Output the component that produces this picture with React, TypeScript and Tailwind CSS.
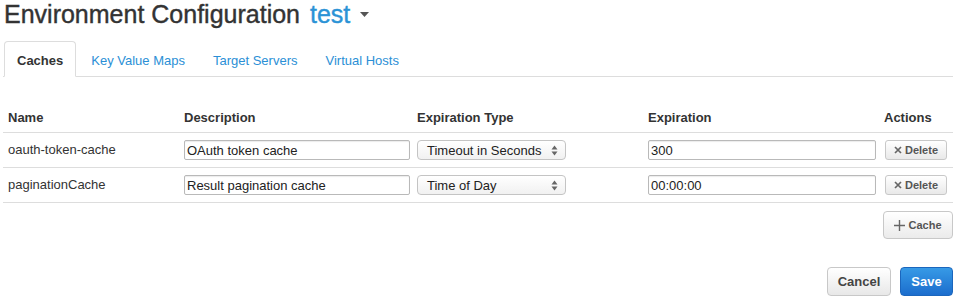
import React from "react";

const font = { fontFamily: '"Liberation Sans", Arial, sans-serif' };

function UpDown() {
  return (
    <svg width="7" height="11" viewBox="0 0 7 11" className="shrink-0">
      <path d="M3.5 0.5 L6.5 4.5 L0.5 4.5 Z" fill="#666" />
      <path d="M3.5 10.5 L6.5 6.5 L0.5 6.5 Z" fill="#666" />
    </svg>
  );
}

function TextInput({ value, w }: { value: string; w: string }) {
  return (
    <div
      className={`${w} h-[20px] border border-[#b9b9b9] rounded-[2px] bg-white shadow-[inset_0_1px_1px_rgba(0,0,0,0.08)] flex items-center pl-[2px] text-[13px] text-[#222] leading-none`}
    >
      {value}
    </div>
  );
}

function SelectBox({ value }: { value: string }) {
  return (
    <div className="w-[149px] h-[20px] border border-[#c4c4c4] rounded-[4px] bg-gradient-to-b from-white to-[#f1f1f1] flex items-center justify-between pl-[9px] pr-[7px] text-[13px] text-[#222] leading-none">
      <span>{value}</span>
      <UpDown />
    </div>
  );
}

function DeleteBtn() {
  return (
    <button className="w-[62px] h-[20px] border border-[#c8c8c8] rounded-[3px] bg-gradient-to-b from-white to-[#e9e9e9] flex items-center justify-center gap-[3px] text-[11px] font-bold text-[#555] leading-none">
      <svg width="8" height="8" viewBox="0 0 8 8">
        <path d="M1 1 L7 7 M7 1 L1 7" stroke="#666" strokeWidth="1.7" />
      </svg>
      <span>Delete</span>
    </button>
  );
}

const cols = "grid grid-cols-[176px_233px_231px_236px_74px]";

export default function App() {
  const rows = [
    { name: "oauth-token-cache", desc: "OAuth token cache", type: "Timeout in Seconds", exp: "300" },
    { name: "paginationCache", desc: "Result pagination cache", type: "Time of Day", exp: "00:00:00" },
  ];
  return (
    <div className="w-[958px] h-[300px] bg-white overflow-hidden text-[#333]" style={font}>
      <div className="pl-[3px] w-[953px]">
        {/* Title */}
        <div className="flex items-center h-[28px] leading-[28px] pl-[1px]">
          <span className="text-[25px] text-[#333] [-webkit-text-stroke:0.4px_#333]">Environment Configuration</span>
          <span className="text-[25px] text-[#2b93d6] ml-[10px] [-webkit-text-stroke:0.4px_#2b93d6]">test</span>
          <svg width="9" height="5" viewBox="0 0 9 5" className="ml-[10px] mt-[1px]">
            <path d="M0 0 L9 0 L4.5 5 Z" fill="#555" />
          </svg>
        </div>

        {/* Tabs */}
        <div className="mt-[13px] flex border-b border-[#dddddd] pl-[1px] h-[36px]">
          <div className="h-[36px] px-[12px] pt-[10px] border border-[#dddddd] border-b-white rounded-t-[4px] bg-white text-[13px] leading-[18px] font-bold text-[#333] mr-[2px]">
            Caches
          </div>
          {["Key Value Maps", "Target Servers", "Virtual Hosts"].map((t) => (
            <div
              key={t}
              className="h-[35px] px-[12px] pt-[10px] border border-transparent text-[13px] leading-[18px] text-[#2b8fd6] mr-[2px]"
            >
              {t}
            </div>
          ))}
        </div>

        {/* Table */}
        <div className="mt-[21px]">
          <div className={`${cols} h-[35px] border-b border-[#dddddd] items-end pb-[5px] text-[13px] leading-[18px] font-bold text-[#333]`}>
            <div className="pl-[5px]">Name</div>
            <div className="pl-[5px]">Description</div>
            <div className="pl-[5px]">Expiration Type</div>
            <div className="pl-[5px]">Expiration</div>
            <div className="pl-[5px]">Actions</div>
          </div>
          {rows.map((r) => (
            <div key={r.name} className={`${cols} h-[35px] border-b border-[#dddddd] items-center text-[13px] text-[#333]`}>
              <div className="pl-[5px]">{r.name}</div>
              <div className="pl-[5px]">
                <TextInput value={r.desc} w="w-[226px]" />
              </div>
              <div className="pl-[5px]">
                <SelectBox value={r.type} />
              </div>
              <div className="pl-[5px]">
                <TextInput value={r.exp} w="w-[228px]" />
              </div>
              <div className="pl-[6px]">
                <DeleteBtn />
              </div>
            </div>
          ))}
        </div>

        {/* Add cache */}
        <div className="flex justify-end mt-[8px]">
          <button className="w-[70px] h-[28px] border border-[#c8c8c8] rounded-[4px] bg-gradient-to-b from-white to-[#ebebeb] flex items-center justify-center gap-[3px] text-[11px] font-bold text-[#555] leading-none">
            <svg width="11" height="11" viewBox="0 0 11 11">
              <path d="M5.5 0 V11 M0 5.5 H11" stroke="#666" strokeWidth="1.4" />
            </svg>
            <span>Cache</span>
          </button>
        </div>

        {/* Footer */}
        <div className="flex justify-end gap-[9px] mt-[28px]">
          <button className="w-[64px] h-[29px] border border-[#c8c8c8] rounded-[4px] bg-gradient-to-b from-white to-[#e8e8e8] text-[13px] font-bold text-[#444] leading-none">
            Cancel
          </button>
          <button className="w-[53px] h-[29px] border border-[#1b66bd] rounded-[4px] bg-gradient-to-b from-[#379ae6] to-[#1c6dcd] text-[13px] font-bold text-white leading-none">
            Save
          </button>
        </div>
      </div>
    </div>
  );
}
